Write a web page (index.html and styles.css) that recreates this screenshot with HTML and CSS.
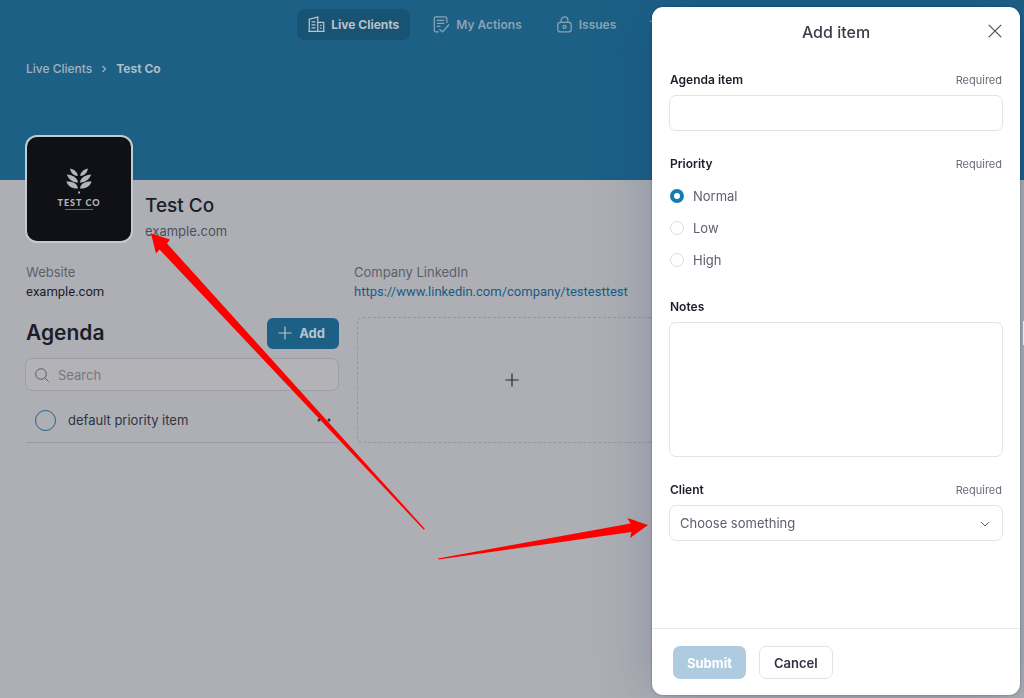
FILE: index.html
```html
<!DOCTYPE html>
<html lang="en">
<head>
<meta charset="utf-8">
<meta name="viewport" content="width=device-width, initial-scale=1">
<title>Test Co</title>
<link rel="stylesheet" href="styles.css">
</head>
<body>
<div class="banner">
  <header class="topbar">
    <nav class="nav" aria-label="Main">
      <a class="nav-item active" href="#">
        <svg class="icon" viewBox="0 0 16 16" aria-hidden="true"><path d="M1.200 14.500V3l8-2v13.500M9.200 6h5.600v8.500M.3 14.500h15.400M3.300 5.500h3.800M3.300 8.300h3.800M3.300 11.100h3.800M11.300 8.800h1.500M11.300 11.500h1.500"/></svg>
        Live Clients
      </a>
      <a class="nav-item" href="#">
        <svg class="icon" viewBox="0 0 16 16" aria-hidden="true"><path d="M13 6.500V2.200Q13 .8 11.600 .8H2.600Q1.200 .8 1.200 2.200V13.500Q1.200 15 2.700 15H5.500M3.600 4.200h7M3.600 7h7M3.600 9.800h3.400M6 12.500l3 2.500L15.200 8"/></svg>
        My Actions
      </a>
      <a class="nav-item" href="#">
        <svg class="icon" viewBox="0 0 16 16" aria-hidden="true"><path d="M4.800 6V4a3.200 3.200 0 0 1 6.400 0v2"/><rect x="1.700" y="6" width="12.600" height="9" rx="2.200"/><circle cx="8" cy="10.300" r="1.400"/></svg>
        Issues
      </a>
      <a class="nav-item" href="#">
        <svg class="icon" viewBox="0 0 16 16" aria-hidden="true"><path d="M0 5h5L8 2l3 3h4v9H5V5"/></svg>
        Tickets
      </a>
    </nav>
  </header>
  <nav class="crumbs" aria-label="Breadcrumb">
    <a href="#">Live Clients</a>
    <svg class="crumb-arrow" viewBox="0 0 6 8" aria-hidden="true"><path d="M1.500 1l3 3-3 3"/></svg>
    <strong>Test Co</strong>
  </nav>
</div>

<main class="page">
  <section class="profile">
    <div class="logo">
      <svg class="leaf" viewBox="0 0 26 26" aria-hidden="true">
        <path d="M11.800 8C7 7.500 5 5 4 .5 8.500 1.500 11.500 4 11.800 8zM14.200 8C19 7.500 21 5 22 .5 17.500 1.500 14.500 4 14.200 8zM12 14.500C7 14.500 3 12 .8 6.500 6.500 7 11.500 9.500 12 14.500zM14 14.500c5 0 9-2.500 11.200-8C19.500 7 14.500 9.500 14 14.500zM12 20.500C6.500 21 2 18.500 .3 13.500 6.500 13 11.500 15.500 12 20.500zM14 20.500c5.500 .5 10-2 11.700-7C19.500 13 14.500 15.500 14 20.500zM12.200 23.500h1.800v2h-1.800z"/>
      </svg>
      <span class="logo-name">TEST CO</span>
    </div>
    <div class="identity">
      <h1>Test Co</h1>
      <p>example.com</p>
    </div>
  </section>

  <dl class="fields">
    <div><dt>Website</dt><dd>example.com</dd></div>
    <div><dt>Company LinkedIn</dt><dd><a href="#">https://www.linkedin.com/company/testesttest</a></dd></div>
  </dl>

  <div class="widgets">
    <section class="agenda">
      <div class="agenda-head">
        <h2>Agenda</h2>
        <button class="add" type="button">
          <svg class="plus" viewBox="0 0 14 14" aria-hidden="true"><path d="M7 .5v13M.5 7h13"/></svg>
          Add
        </button>
      </div>
      <label class="search">
        <svg class="glass" viewBox="0 0 14 14" aria-hidden="true"><circle cx="6" cy="6" r="5.300"/><path d="M10 10l3.600 3.600"/></svg>
        <input type="search" placeholder="Search" aria-label="Search">
      </label>
      <div class="task">
        <input class="task-check" type="checkbox" id="task">
        <label for="task">default priority item</label>
        <button class="more" type="button" aria-label="More">
          <svg viewBox="0 0 14 4" aria-hidden="true"><circle cx="2" cy="2" r="1.500"/><circle cx="7" cy="2" r="1.500"/><circle cx="12" cy="2" r="1.500"/></svg>
        </button>
      </div>
    </section>
    <button class="slot" type="button" aria-label="Add widget">
      <svg class="plus" viewBox="0 0 14 14" aria-hidden="true"><path d="M7 .5v13M.5 7h13"/></svg>
    </button>
  </div>
</main>

<div class="side-handle"></div>

<form class="drawer">
  <header class="drawer-head">
    <h2>Add item</h2>
    <button class="close" type="button" aria-label="Close">
      <svg viewBox="0 0 14 14" aria-hidden="true"><path d="M.8 .8l12.400 12.400M13.200 .8L.8 13.200"/></svg>
    </button>
  </header>
  <div class="drawer-body">
    <div class="group">
      <div class="label-row"><label for="item">Agenda item</label><span>Required</span></div>
      <input class="box" id="item" type="text">
    </div>
    <div class="group" role="radiogroup" aria-labelledby="prio">
      <div class="label-row"><b id="prio">Priority</b><span>Required</span></div>
      <div class="radios">
        <label><input type="radio" name="priority" checked>Normal</label>
        <label><input type="radio" name="priority">Low</label>
        <label><input type="radio" name="priority">High</label>
      </div>
    </div>
    <div class="group">
      <div class="label-row"><label for="notes">Notes</label></div>
      <textarea class="box notes" id="notes"></textarea>
    </div>
    <div class="group">
      <div class="label-row"><label for="client">Client</label><span>Required</span></div>
      <div class="select-wrap">
        <select class="box" id="client"><option>Choose something</option></select>
        <svg class="chevron" viewBox="0 0 10 6" aria-hidden="true"><path d="M1 1l4 4 4-4"/></svg>
      </div>
    </div>
  </div>
  <footer class="drawer-foot">
    <button class="submit" type="submit" disabled>Submit</button>
    <button class="cancel" type="button">Cancel</button>
  </footer>
</form>

<svg class="arrows" viewBox="0 0 1024 698" aria-hidden="true">
  <path d="M151 233.500L170 239.500 167 243.500 425 529 423.500 529.500 159.500 249.500 156 253.500z"/>
  <path d="M648 525L627.500 518 630.500 523.500 438 558.500 438.500 559.500 631.500 532 630 538z"/>
</svg>
</body>
</html>
```
FILE: styles.css
```css
* { box-sizing: border-box; }
body {
  margin: 0;
  min-height: 100vh;
  overflow: hidden;
  background: #aeafb4;
  color: #1b1e28;
  font-family: Inter, "Liberation Sans", sans-serif;
  font-size: 13px;
  line-height: 20px;
}
h1, h2, p, dl, dd { margin: 0; }
a { color: inherit; text-decoration: none; }
button, input, select, textarea { font: inherit; color: inherit; margin: 0; }
svg { fill: none; stroke: currentColor; flex: none; }

.banner { height: 180px; background: #1c6086; font-size: 12px; }
.topbar { height: 50px; display: flex; justify-content: center; align-items: center; border-bottom: 1px solid #1b5c80; }
.nav { display: flex; gap: 12px; }
.nav-item {
  display: flex;
  align-items: center;
  gap: 6px;
  height: 31px;
  padding: 0 11px;
  border-radius: 7px;
  color: #8ba3b4;
  font-weight: 600;
}
.nav-item.active { background: #195373; color: #b9c2cb; font-weight: 700; }
.icon { width: 17px; height: 17px; stroke-width: 1.2; }
.crumbs { display: flex; align-items: center; gap: 9px; padding: 9px 26px; color: #a3b2be; font-weight: 500; }
.crumbs strong { font-weight: 700; color: #b3bcc5; }
.crumb-arrow { width: 6px; height: 8px; stroke-width: 1.2; }

.page { padding: 0 25px; }
.profile { display: flex; align-items: flex-end; gap: 12px; margin-top: -45px; }
.logo {
  display: flex;
  flex-direction: column;
  align-items: center;
  justify-content: center;
  gap: 3px;
  width: 108px;
  height: 108px;
  border: 2px solid #c4cad2;
  border-radius: 12px;
  background: #101117;
  color: #b4b5ba;
}
.leaf { width: 26px; height: 26px; fill: currentColor; stroke: none; }
.logo-name {
  display: flex;
  flex-direction: column;
  align-items: center;
  font: 900 9px/12px Lato, sans-serif;
  letter-spacing: 1px;
}
.logo-name::after { content: ""; width: 28px; height: 1px; background: #696a72; }
.identity h1 { font-size: 19px; font-weight: 500; line-height: 26px; }
.identity p { line-height: 24px; color: #4a4f5d; }

.fields { display: grid; grid-template-columns: repeat(3, 1fr); gap: 12px; padding: 19px 1px 0; }
.fields dt { color: #5b606c; }
.fields dd { font-family: Roboto, sans-serif; line-height: 19px; }
.fields a { color: #195b84; }

.widgets { display: grid; grid-template-columns: repeat(3, 1fr); gap: 16px; margin-top: 16px; }
.agenda-head { display: flex; justify-content: space-between; align-items: center; padding-left: 1px; }
.agenda-head h2 { font-size: 21px; font-weight: 600; line-height: 32px; }
.add {
  display: flex;
  align-items: center;
  gap: 7px;
  height: 31px;
  padding: 0 14px 0 11px;
  border: 0;
  border-radius: 6px;
  background: #1c6086;
  color: #b9c3cc;
  font-weight: 700;
}
.plus { width: 14px; height: 14px; stroke-width: 1.2; }
.search {
  display: flex;
  align-items: center;
  gap: 9px;
  height: 33px;
  margin-top: 9px;
  padding: 0 9px;
  border: 1px solid #9b9ea5;
  border-radius: 7px;
  background: #b2b2b7;
  color: #5c616d;
}
.search input { flex: 1; min-width: 0; padding: 0; border: 0; outline: 0; background: none; }
.search input::placeholder { color: #737781; opacity: 1; }
.glass { width: 14px; height: 14px; }
.task { display: flex; align-items: center; gap: 12px; height: 52px; margin-left: 1px; padding: 7px 8px 0 9px; border-bottom: 1px solid #999ba2; color: #30343f; }
.task label { flex: 1; }
.task-check { appearance: none; width: 21px; height: 21px; border: 1px solid #1c6086; border-radius: 50%; }
.more { display: flex; padding: 0; border: 0; background: none; }
.more svg { width: 14px; height: 4px; fill: currentColor; stroke: none; }
.slot {
  display: grid;
  place-items: center;
  height: 126px;
  margin: 0 2px;
  border: 1px dashed #9497a0;
  border-radius: 6px;
  background: none;
  color: #262936;
}

.side-handle { position: fixed; right: 0; top: 321px; width: 1px; height: 24px; background: #fff; }

.drawer {
  position: fixed;
  top: 7px;
  right: 4px;
  bottom: 3px;
  width: 368px;
  display: flex;
  flex-direction: column;
  border-radius: 11px;
  background: #fff;
  box-shadow: 0 0 2px rgba(20, 30, 60, .5), 0 4px 60px rgba(20, 50, 100, .25);
}
.drawer-head { position: relative; height: 50px; display: grid; place-items: center; }
.drawer-head h2 { font-size: 16px; font-weight: 500; color: #3a3d49; }
.close { position: absolute; right: 18px; top: 17px; display: flex; padding: 0; border: 0; background: none; color: #4a4e5c; }
.close svg { width: 14px; height: 14px; stroke-width: 1.2; }
.drawer-body { flex: 1; display: flex; flex-direction: column; gap: 23px; padding: 13px 17px 0; }
.label-row { display: flex; justify-content: space-between; margin-bottom: 5px; padding: 0 1px; }
.label-row label, .label-row b { font-size: 12px; font-weight: 600; }
.label-row span { font-size: 11px; color: #696d79; }
.box {
  display: block;
  width: 100%;
  height: 36px;
  padding: 0 10px;
  border: 1px solid #e2e3e6;
  border-radius: 7px;
  background: #fff;
  color: #5c606d;
}
.notes { height: 135px; resize: none; }
.radios { display: flex; flex-direction: column; gap: 8px; padding: 5px 1px 2px; }
.radios label { display: flex; align-items: center; gap: 9px; height: 24px; color: #5c606d; }
.radios input { appearance: none; width: 14px; height: 14px; border: 1px solid #d8dade; border-radius: 50%; background: #fff; }
.radios input:checked { border: 4px solid #137eb1; }
.select-wrap { position: relative; }
.select-wrap select { appearance: none; }
.chevron { position: absolute; right: 13px; top: 16px; width: 10px; height: 6px; color: #5c606d; }
.drawer-foot { display: flex; gap: 13px; height: 67px; padding: 17px 21px; border-top: 1px solid #e8e9eb; }
.drawer-foot button { height: 33px; border-radius: 7px; }
.submit { padding: 0 14px; border: 0; background: #aecbe0; color: #fff; font-weight: 700; }
.cancel { padding: 0 14px; border: 1px solid #e2e3e6; background: #fff; color: #30333f; font-weight: 600; }

.arrows { position: fixed; top: 0; left: 0; width: 1024px; height: 698px; pointer-events: none; fill: #f00; stroke: none; }
```
